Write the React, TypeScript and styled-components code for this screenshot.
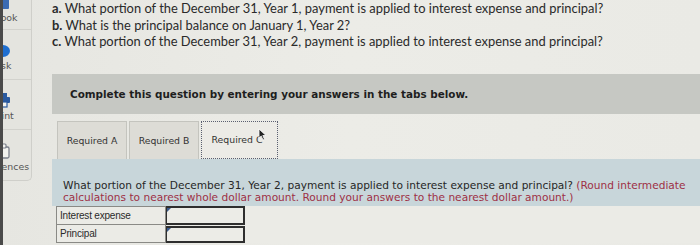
import React from 'react'
import styled, { createGlobalStyle } from 'styled-components'

const Global = createGlobalStyle`
  html, body {
    margin: 0;
    padding: 0;
    background: #ebebe6;
  }
  body {
    width: 700px;
    height: 245px;
    overflow: hidden;
  }
`

const Page = styled.div`
  display: flex;
  width: 700px;
  height: 245px;
  overflow: hidden;
  background: linear-gradient(90deg, #e6e6e1 0%, #ecece7 50%, #eaeae5 100%);
`

const Edge = styled.div`
  width: 3px;
  flex: none;
  background: #4a4a4a;
`

const Sidebar = styled.div`
  width: 28px;
  flex: none;
  align-self: flex-start;
  display: flex;
  flex-direction: column;
  overflow: hidden;
  background: #e4e4df;
  border-right: 1px solid #cfcfca;
  border-bottom: 1px solid #cfcfca;
  border-bottom-right-radius: 5px;
  margin-top: -20px;
`

const NavItem = styled.div`
  height: 50px;
  flex: none;
  display: flex;
  flex-direction: column;
  align-items: center;
  justify-content: flex-end;
  gap: 3px;
  width: 58px;
  margin-left: -29px;
  padding-bottom: 8px;
  box-sizing: border-box;
  border-bottom: 1px solid #d2d2cd;
  &:first-child {
    padding-bottom: 6px;
  }
  &:last-child {
    border-bottom: none;
  }
`

const NavLabel = styled.span`
  font-family: 'DejaVu Sans', sans-serif;
  font-size: 9.4px;
  color: #555;
  line-height: 10px;
`

const Main = styled.div`
  flex: 1;
  display: flex;
  flex-direction: column;
  padding-left: 20px;
  min-width: 0;
`

const Questions = styled.ol`
  list-style: none;
  margin: 0;
  padding: 0;
  font-family: Lato, 'Open Sans', sans-serif;
  font-size: 12.9px;
  line-height: 16.5px;
  color: #2a2a2a;
`

const Banner = styled.div`
  margin-top: 24px;
  height: 40px;
  background: #c6c8c3;
  display: flex;
  align-items: center;
  padding-left: 18px;
  font-family: 'DejaVu Sans', Verdana, sans-serif;
  font-weight: bold;
  font-size: 10.4px;
  color: #1e1e1e;
`

const Tabs = styled.div`
  display: flex;
  gap: 2px;
  margin-top: 7px;
  padding-left: 5px;
  height: 38px;
`

const Tab = styled.div<{ active?: boolean }>`
  display: flex;
  align-items: center;
  justify-content: center;
  width: ${(p) => (p.active ? 77 : 70)}px;
  box-sizing: border-box;
  font-family: 'DejaVu Sans', Verdana, sans-serif;
  font-size: 9.3px;
  color: #333;
  background: ${(p) => (p.active ? '#ecebe6' : '#dddcd6')};
  border: ${(p) => (p.active ? '1.5px dotted #5a5f70' : '1px solid #c4c4be')};
  border-bottom: ${(p) => (p.active ? '1.5px dotted #5a5f70' : 'none')};
`

const Panel = styled.div`
  background: #c8d6da;
  padding: 20px 8px 3px 11px;
  font-family: 'DejaVu Sans', Verdana, sans-serif;
  font-size: 10.6px;
  line-height: 12px;
  color: #262626;
`

const Note = styled.span`
  color: #9e3045;
`

const Table = styled.div`
  display: grid;
  grid-template-columns: 110px 79px;
  margin: 0 0 0 4px;
  background: #ebebe6;
`

const Label = styled.div`
  height: 17px;
  display: flex;
  align-items: center;
  padding-left: 3px;
  font-family: 'Liberation Sans', Arial, sans-serif;
  font-size: 10px;
  letter-spacing: -0.2px;
  color: #2a2a2a;
  border: 1px solid #8a8a86;
  border-top: none;
  &:first-child {
    border-top: 1px solid #8a8a86;
  }
`

const Input = styled.div<{ first?: boolean }>`
  position: relative;
  box-sizing: border-box;
  border: 2px solid #2e2e2e;
  border-left-width: 1.5px;
  margin-top: ${(p) => (p.first ? 0 : 1)}px;
  height: ${(p) => (p.first ? 19 : 17)}px;
  background: #ecece7;
  &::before {
    content: '';
    position: absolute;
    left: 0;
    top: 0;
    border-left: 4px solid #3a5a8c;
    border-bottom: 4px solid transparent;
  }
`

const Cursor = styled.svg`
  margin-left: -4px;
  margin-top: -10px;
`

const BookIcon = () => (
  <svg width="14" height="12" viewBox="0 0 14 12">
    <rect x="1" y="1" width="12" height="10" rx="1" fill="#3b6bb3" />
  </svg>
)

const AskIcon = () => (
  <svg width="16" height="14" viewBox="0 0 16 14">
    <ellipse cx="8" cy="7" rx="7" ry="6" fill="#1f6fd1" />
  </svg>
)

const PrintIcon = () => (
  <svg width="16" height="15" viewBox="0 0 16 15">
    <rect x="4" y="0" width="8" height="4" fill="#2a5aa0" />
    <rect x="1" y="4" width="14" height="6" rx="1" fill="#2a5aa0" />
    <rect x="4" y="9" width="8" height="5" fill="#f4f4f0" stroke="#2a5aa0" strokeWidth="1.2" />
  </svg>
)

const RefIcon = () => (
  <svg width="16" height="16" viewBox="0 0 16 16">
    <rect x="2" y="4" width="12" height="11" rx="1.5" fill="#f2f2ee" stroke="#7a7f8a" strokeWidth="1.3" />
    <rect x="5" y="1" width="6" height="4" rx="1" fill="#f2f2ee" stroke="#7a7f8a" strokeWidth="1.2" />
  </svg>
)

const nav = [
  { label: 'eBook', icon: <BookIcon /> },
  { label: 'Ask', icon: <AskIcon /> },
  { label: 'Print', icon: <PrintIcon /> },
  { label: 'References', icon: <RefIcon /> },
]

export default function App() {
  return (
    <Page>
      <Global />
      <Edge />
      <Sidebar>
        {nav.map((n) => (
          <NavItem key={n.label}>
            {n.icon}
            <NavLabel>{n.label}</NavLabel>
          </NavItem>
        ))}
      </Sidebar>
      <Main>
        <Questions>
          <li>
            <b>a.</b> What portion of the December 31, Year 1, payment is applied to interest expense and principal?
          </li>
          <li>
            <b>b.</b> What is the principal balance on January 1, Year 2?
          </li>
          <li>
            <b>c.</b> What portion of the December 31, Year 2, payment is applied to interest expense and principal?
          </li>
        </Questions>
        <Banner>Complete this question by entering your answers in the tabs below.</Banner>
        <Tabs>
          <Tab>Required A</Tab>
          <Tab>Required B</Tab>
          <Tab active>
            Required C
            <Cursor width="9" height="13" viewBox="0 0 9 13">
              <path d="M1 1 L1 10 L3.2 8 L5 12 L6.5 11.3 L4.8 7.5 L8 7.5 Z" fill="#222" stroke="#fff" strokeWidth="0.8" />
            </Cursor>
          </Tab>
        </Tabs>
        <Panel>
          What portion of the December 31, Year 2, payment is applied to interest expense and principal?{' '}
          <Note>
            (Round intermediate calculations to nearest whole dollar amount. Round your answers to the nearest
            dollar amount.)
          </Note>
        </Panel>
        <Table>
          <Label>Interest expense</Label>
          <Input first />
          <Label>Principal</Label>
          <Input />
        </Table>
      </Main>
    </Page>
  )
}
